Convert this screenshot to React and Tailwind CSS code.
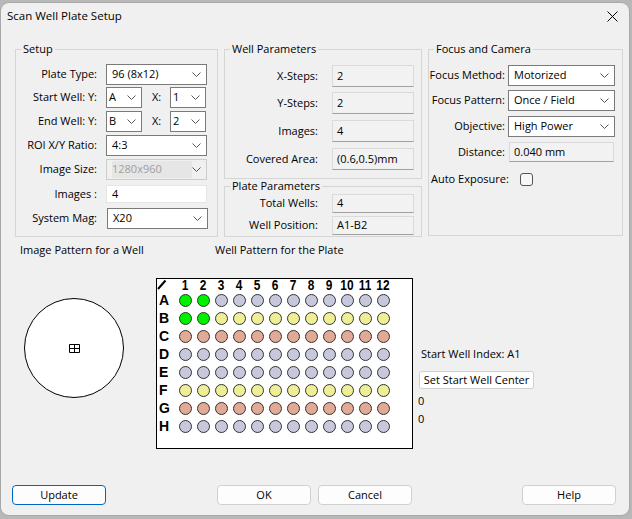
import clsx from 'clsx';

const ui = "font-['Segoe_UI','Open_Sans',sans-serif] text-[11px] text-black";

const Chevron = () => (
  <svg width="9" height="5" viewBox="0 0 9 5" className="shrink-0">
    <path d="M0.5 0.5 L4.5 4.5 L8.5 0.5" fill="none" stroke="#555" strokeWidth="1" />
  </svg>
);

const Combo = ({ value, className, disabled, small }) => (
  <div
    className={clsx(
      'flex h-[21px] items-center justify-between border pr-[5px]',
      small ? 'pl-[2px]' : 'pl-[5px]',
      disabled ? 'border-[#cccccc] bg-[#f0f0f0] text-[#a0a0a0]' : 'border-[#7a7a7a] bg-white',
      className
    )}
  >
    <span className={clsx(disabled && 'bg-[#e6e6e6] pr-[34px] w-[80px]')}>{value}</span>
    <Chevron />
  </div>
);

const ReadOnly = ({ value, className }) => (
  <div className={clsx('flex items-center border border-[#dadada] border-b-[#a0a0a0] bg-[#f2f2f2] pl-[4px]', className)}>
    {value}
  </div>
);

const Group = ({ title, className, children }) => (
  <fieldset className={clsx('border border-[#d5d5d5]', className)}>
    <legend className="ml-[5px] px-[2px] leading-[14px]">{title}</legend>
    {children}
  </fieldset>
);

const COLS = ['1', '2', '3', '4', '5', '6', '7', '8', '9', '10', '11', '12'];
const ROWS = [
  ['A', 'ggnnnnnnnnnn'],
  ['B', 'ggyyyyyyyyyy'],
  ['C', 'ssssssssssss'],
  ['D', 'nnnnnnnnnnnn'],
  ['E', 'nnnnnnnnnnnn'],
  ['F', 'yyyyyyyyyyyy'],
  ['G', 'ssssssssssss'],
  ['H', 'nnnnnnnnnnnn'],
];
const WELL = {
  g: 'bg-[#00f000]',
  n: 'bg-[#c8c8dc]',
  y: 'bg-[#eeee98]',
  s: 'bg-[#e0aa96]',
};

const Plate = () => (
  <div className="h-[171px] w-[257px] border border-black bg-white font-['Liberation_Sans_Narrow','Liberation_Sans',sans-serif] text-[14px] font-bold">
    <div className="flex h-[12px]">
      <div className="w-[19px]">
        <svg width="19" height="12" viewBox="0 0 19 12">
          <path d="M1 10 L8.5 1.5" stroke="#000" strokeWidth="2" />
        </svg>
      </div>
      {COLS.map((c) => (
        <div key={c} className="w-[18px] origin-center scale-x-[0.85] text-center leading-[13px]">{c}</div>
      ))}
    </div>
    {ROWS.map(([letter, wells]) => (
      <div key={letter} className="flex h-[18px] items-center">
        <div className="w-[19px] pl-[2px] leading-none">{letter}</div>
        {wells.split('').map((w, i) => (
          <div key={i} className="flex w-[18px] justify-center">
            <div className={clsx('h-[13px] w-[13px] rounded-full border border-[#333]', WELL[w])} />
          </div>
        ))}
      </div>
    ))}
  </div>
);

const Button = ({ children, className, focused }) => (
  <button
    className={clsx(
      'flex h-[20px] w-[94px] items-center justify-center rounded-[4px] border bg-[#fdfdfd]',
      focused ? 'border-[#0067c0]' : 'border-[#d0d0d0]',
      className
    )}
  >
    {children}
  </button>
);

export default function App() {
  return (
    <div className={clsx('h-[519px] w-[632px] overflow-hidden bg-[#b8b8b8] pt-[3px] pl-[1px]', ui)}>
      <div className="flex h-[512px] w-[628px] flex-col rounded-[8px] bg-[#f0f0f0] shadow-[0_0_0_1px_#a8a8a8]">
        {/* title bar */}
        <div className="flex h-[26px] items-center justify-between pl-[6px] pr-[11px] text-[11.5px]">
          <span>Scan Well Plate Setup</span>
          <svg width="11" height="11" viewBox="0 0 11 11">
            <path d="M0.5 0.5 L10.5 10.5 M10.5 0.5 L0.5 10.5" stroke="#000" strokeWidth="1" />
          </svg>
        </div>

        {/* group boxes */}
        <div className="mt-[13px] flex pl-[14px]">
          <Group title="Setup" className="h-[195px] w-[203px]">
            <div className="mt-[8px] flex h-[21px] items-center">
              <span className="w-[81px] text-right">Plate Type:</span>
              <Combo value="96 (8x12)" className="ml-[9px] w-[101px]" />
            </div>
            <div className="mt-[2px] flex h-[21px] items-center">
              <span className="w-[81px] text-right">Start Well: Y:</span>
              <Combo value="A" small className="ml-[9px] w-[36px]" />
              <span className="ml-[10px] w-[18px]">X:</span>
              <Combo value="1" small className="w-[36px]" />
            </div>
            <div className="mt-[3px] flex h-[21px] items-center">
              <span className="w-[81px] text-right">End Well: Y:</span>
              <Combo value="B" small className="ml-[9px] w-[36px]" />
              <span className="ml-[10px] w-[18px]">X:</span>
              <Combo value="2" small className="w-[36px]" />
            </div>
            <div className="mt-[3px] flex h-[21px] items-center">
              <span className="w-[81px] text-right">ROI X/Y Ratio:</span>
              <Combo value="4:3" className="ml-[9px] w-[101px]" />
            </div>
            <div className="mt-[3px] flex h-[21px] items-center">
              <span className="w-[81px] text-right">Image Size:</span>
              <Combo value="1280x960" disabled className="ml-[9px] w-[101px]" />
            </div>
            <div className="mt-[5px] flex h-[18px] items-center">
              <span className="w-[81px] text-right">Images :</span>
              <div className="ml-[9px] flex h-[18px] w-[101px] items-center border border-[#e6e6e6] bg-white pl-[5px]">4</div>
            </div>
            <div className="mt-[5px] flex h-[21px] items-center">
              <span className="w-[81px] text-right">System Mag:</span>
              <Combo value="X20" className="ml-[10px] w-[101px]" />
            </div>
          </Group>

          <div className="ml-[6px] flex w-[198px] flex-col">
            <Group title="Well Parameters" className="h-[137px]">
              {[
                ['X-Steps:', '2', 'mt-[9px]'],
                ['Y-Steps:', '2', 'mt-[5px]'],
                ['Images:', '4', 'mt-[6px]'],
                ['Covered Area:', '(0.6,0.5)mm', 'mt-[6px]'],
              ].map(([label, value, mt]) => (
                <div key={label} className={clsx('flex h-[22px] items-center', mt)}>
                  <span className="w-[93px] text-right">{label}</span>
                  <ReadOnly value={value} className="ml-[14px] h-[22px] w-[82px]" />
                </div>
              ))}
            </Group>
            <Group title="Plate Parameters" className="h-[58px]">
              <div className="mt-[1px] flex h-[19px] items-center">
                <span className="w-[93px] text-right">Total Wells:</span>
                <ReadOnly value="4" className="ml-[14px] h-[19px] w-[82px]" />
              </div>
              <div className="mt-[3px] flex h-[19px] items-center">
                <span className="w-[93px] text-right">Well Position:</span>
                <ReadOnly value="A1-B2" className="ml-[14px] h-[19px] w-[82px]" />
              </div>
            </Group>
          </div>

          <Group title="Focus and Camera" className="ml-[6px] h-[194px] w-[195px]">
            <div className="mt-[9px] flex h-[20px] items-center">
              <span className="w-[76px] text-right">Focus Method:</span>
              <Combo value="Motorized" className="ml-[3px] h-[20px] w-[107px] pl-[4px]" />
            </div>
            <div className="mt-[5px] flex h-[20px] items-center">
              <span className="w-[76px] text-right">Focus Pattern:</span>
              <Combo value="Once / Field" className="ml-[3px] h-[20px] w-[107px] pl-[4px]" />
            </div>
            <div className="mt-[6px] flex h-[20px] items-center">
              <span className="w-[76px] text-right">Objective:</span>
              <Combo value="High Power" className="ml-[3px] h-[20px] w-[107px] pl-[4px]" />
            </div>
            <div className="mt-[6px] flex h-[20px] items-center">
              <span className="w-[76px] text-right">Distance:</span>
              <ReadOnly value="0.040 mm" className="ml-[4px] h-[20px] w-[105px]" />
            </div>
            <div className="mt-[10px] flex h-[14px] items-center pl-[2px]">
              <span>Auto Exposure:</span>
              <div className="ml-[11px] h-[13px] w-[13px] rounded-[3px] border border-[#555] bg-[#f7f7f7]" />
            </div>
          </Group>
        </div>

        {/* captions */}
        <div className="mt-[6px] flex h-[14px] items-center pl-[19px] leading-[14px]">
          <span className="w-[195px]">Image Pattern for a Well</span>
          <span>Well Pattern for the Plate</span>
        </div>

        {/* drawings */}
        <div className="flex pl-[14px]">
          <div className="ml-[9px] mt-[41px] flex h-[100px] w-[100px] items-center justify-center rounded-full border border-black bg-white">
            <svg width="11" height="9" viewBox="0 0 11 9">
              <path d="M0.5 0.5 H10.5 V8.5 H0.5 Z M5.5 0.5 V8.5 M0.5 4.5 H10.5" fill="none" stroke="#000" strokeWidth="1" />
            </svg>
          </div>
          <div className="ml-[32px] mt-[21px]">
            <Plate />
          </div>
          <div className="ml-[5px] mt-[90px] flex flex-col">
            <div className="h-[14px] pl-[3px] leading-[14px]">Start Well Index: A1</div>
            <button className="ml-[1px] mt-[10px] flex h-[18px] w-[115px] items-center justify-center rounded-[3px] border border-[#d0d0d0] bg-white">
              Set Start Well Center
            </button>
            <div className="mt-[3px] flex h-[18px] items-center">0</div>
            <div className="flex h-[18px] items-center">0</div>
          </div>
        </div>

        {/* buttons */}
        <div className="mt-auto mb-[10px] flex">
          <Button focused className="ml-[11px]">Update</Button>
          <Button className="ml-[111px]">OK</Button>
          <Button className="ml-[7px]">Cancel</Button>
          <Button className="ml-[110px]">Help</Button>
        </div>
      </div>
    </div>
  );
}
